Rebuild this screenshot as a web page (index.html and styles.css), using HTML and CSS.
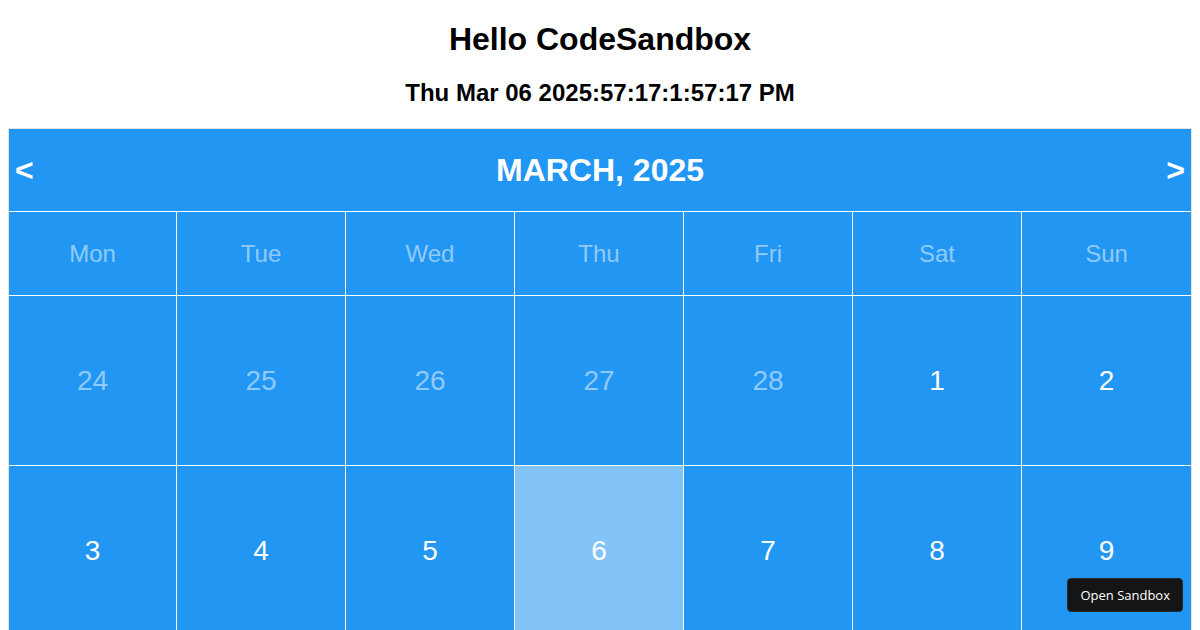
FILE: index.html
```html
<!DOCTYPE html>
<html lang="en">
<head>
    <meta charset="UTF-8">
    <title>Hello CodeSandbox</title>
    <link rel="stylesheet" href="styles.css">
</head>
<body>
<div class="app">
    <h1>Hello CodeSandbox</h1>
    <h2>Thu Mar 06 2025:57:17:1:57:17 PM</h2>

    <div class="calendar">
        <div class="cal-header">
            <span class="nav">&lt;</span>
            <span class="month">MARCH, 2025</span>
            <span class="nav">&gt;</span>
        </div>

        <div class="week-days">
            <div class="cell">Mon</div>
            <div class="cell">Tue</div>
            <div class="cell">Wed</div>
            <div class="cell">Thu</div>
            <div class="cell">Fri</div>
            <div class="cell">Sat</div>
            <div class="cell">Sun</div>
        </div>

        <div class="days">
            <div class="cell other">24</div>
            <div class="cell other">25</div>
            <div class="cell other">26</div>
            <div class="cell other">27</div>
            <div class="cell other">28</div>
            <div class="cell">1</div>
            <div class="cell">2</div>

            <div class="cell">3</div>
            <div class="cell">4</div>
            <div class="cell">5</div>
            <div class="cell today">6</div>
            <div class="cell">7</div>
            <div class="cell">8</div>
            <div class="cell">9</div>

            <div class="cell">10</div>
            <div class="cell">11</div>
            <div class="cell">12</div>
            <div class="cell">13</div>
            <div class="cell">14</div>
            <div class="cell">15</div>
            <div class="cell">16</div>

            <div class="cell">17</div>
            <div class="cell">18</div>
            <div class="cell">19</div>
            <div class="cell">20</div>
            <div class="cell">21</div>
            <div class="cell">22</div>
            <div class="cell">23</div>

            <div class="cell">24</div>
            <div class="cell">25</div>
            <div class="cell">26</div>
            <div class="cell">27</div>
            <div class="cell">28</div>
            <div class="cell">29</div>
            <div class="cell">30</div>

            <div class="cell">31</div>
            <div class="cell other">1</div>
            <div class="cell other">2</div>
            <div class="cell other">3</div>
            <div class="cell other">4</div>
            <div class="cell other">5</div>
            <div class="cell other">6</div>
        </div>
    </div>
</div>

<a href="javascript:" class="open-sandbox">Open Sandbox</a>
</body>
</html>
```

FILE: styles.css
```css
body{
    margin: 0 8px 8px 8px;
    font-family: "Liberation Sans", Arial, sans-serif;
    color: #000;
    background: #fff;
}
.app{
    text-align: center;
    padding-top: 1px;
}
h1{
    font-size: 32px;
    margin: 20px 0 21px 0;
}
h2{
    font-size: 24px;
    margin: 20px 0 21px 0;
}
.calendar{
    border: 1px solid #e3e3e3;
    background-color: #2196f3;
    color: #fff;
}
.cal-header{
    display: flex;
    align-items: center;
    justify-content: space-between;
    height: 82px;
    padding: 0 6px;
    border-bottom: 1px solid #fff;
    font-size: 32px;
    font-weight: bold;
}
.week-days,
.days{
    display: grid;
    grid-template-columns: 168px repeat(6, 1fr);
}
.cell{
    display: flex;
    align-items: center;
    justify-content: center;
    border-right: 1px solid #fff;
    border-bottom: 1px solid #fff;
}
.cell:nth-child(7n){
    border-right: none;
}
.week-days .cell{
    height: 84px;
    padding-top: 1px;
    box-sizing: border-box;
    font-size: 24px;
    color: rgba(255,255,255,0.5);
}
.days .cell{
    height: 169px;
    font-size: 28px;
}
.days .other{
    color: rgba(255,255,255,0.5);
}
.days .today{
    background-color: #82c4f8;
}
a{
    text-decoration: none;
}
.open-sandbox{
    position: fixed;
    right: 17px;
    bottom: 18px;
    height: 34px;
    padding: 0 12px;
    display: flex;
    align-items: center;
    box-sizing: border-box;
    background-color: #151515;
    border: 1px solid #2a2a2a;
    border-radius: 4px;
    color: #fff;
    font-family: "Open Sans", "Noto Sans", sans-serif;
    font-size: 13px;
    font-weight: 500;
}
```
